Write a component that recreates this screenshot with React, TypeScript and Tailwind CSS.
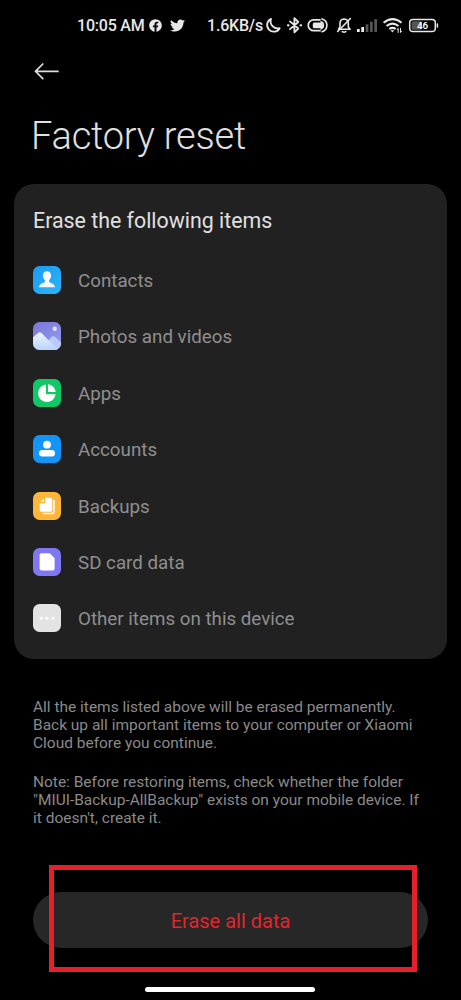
import type { ReactNode } from 'react'
import { FaFacebook, FaTwitter } from 'react-icons/fa'

interface EraseItem {
  label: string;
  icon: ReactNode;
}

const items: EraseItem[] = [
  { label: 'Contacts', icon: <ContactsIcon /> },
  { label: 'Photos and videos', icon: <PhotosIcon /> },
  { label: 'Apps', icon: <AppsIcon /> },
  { label: 'Accounts', icon: <AccountsIcon /> },
  { label: 'Backups', icon: <BackupsIcon /> },
  { label: 'SD card data', icon: <SdCardIcon /> },
  { label: 'Other items on this device', icon: <OtherIcon /> },
]

function ContactsIcon() {
  return (
    <svg width="28" height="28" viewBox="0 0 28 28">
      <defs>
        <linearGradient id="contacts-bg" x1="0" y1="0" x2="1" y2="1">
          <stop offset="0" stopColor="#1a9bf4" />
          <stop offset="1" stopColor="#2db4f8" />
        </linearGradient>
      </defs>
      <rect width="28" height="28" rx="6.5" fill="url(#contacts-bg)" />
      <path d="M14 5.2c-2.7 0-4.1 1.8-4.1 4.3 0 1.9.9 3.7 2 4.7v1.6c0 .8-5.9 1.9-5.9 5.4h16c0-3.5-5.9-4.6-5.9-5.4v-1.6c1.1-1 2-2.8 2-4.7 0-2.5-1.4-4.3-4.1-4.3z" fill="#f4fbff" />
    </svg>
  )
}

function PhotosIcon() {
  return (
    <svg width="28" height="28" viewBox="0 0 28 28">
      <defs>
        <linearGradient id="photos-bg" x1="0" y1="0" x2="0.7" y2="1">
          <stop offset="0" stopColor="#7c74da" />
          <stop offset="1" stopColor="#8e9df0" />
        </linearGradient>
        <linearGradient id="photos-hill" x1="0" y1="0" x2="0" y2="1">
          <stop offset="0" stopColor="#eef3ff" />
          <stop offset="1" stopColor="#b9d4fb" />
        </linearGradient>
        <clipPath id="photos-clip">
          <rect width="28" height="28" rx="6.5" />
        </clipPath>
      </defs>
      <g clipPath="url(#photos-clip)">
        <rect width="28" height="28" fill="url(#photos-bg)" />
        <path d="M12 22l6.5-7q1.8-1.9 3.6 0L28 20.5V28H12z" fill="#bccbfa" />
        <path d="M0 15.5l5-4.4q1.9-1.6 3.8.1L25 28H0z" fill="url(#photos-hill)" />
        <circle cx="21.7" cy="6.7" r="2.2" fill="#f0dcf8" />
      </g>
    </svg>
  )
}

function AppsIcon() {
  return (
    <svg width="28" height="28" viewBox="0 0 28 28">
      <rect width="28" height="28" rx="6.5" fill="#12c866" />
      <path d="M12.9 5.5a8.8 8.8 0 1 0 9.7 9.7h-9.7z" fill="#fff" />
      <path d="M15 5.2a8.7 8.7 0 0 1 7.7 7.8H15z" fill="#fff" />
    </svg>
  )
}

function AccountsIcon() {
  return (
    <svg width="28" height="28" viewBox="0 0 28 28">
      <rect width="28" height="28" rx="6.5" fill="#1294f8" />
      <circle cx="14" cy="9.7" r="3.9" fill="#fff" />
      <rect x="6" y="15" width="16" height="6.4" rx="3.2" fill="#fff" />
    </svg>
  )
}

function BackupsIcon() {
  return (
    <svg width="28" height="28" viewBox="0 0 28 28">
      <rect width="28" height="28" rx="6.5" fill="#fdb63a" />
      <path d="M12.3 5.8h5.4q1.6 0 1.6 1.6v10.7q0 1.6-1.6 1.6H8.3q-1.6 0-1.6-1.6v-6.8h4q1.6 0 1.6-1.6z" fill="#fff" />
      <path d="M10.9 6.4v2.5q0 1.1-1.1 1.1H7.3z" fill="#fff" />
      <path d="M21 8.5v11.3q0 1.7-1.7 1.7h-9" fill="none" stroke="#fff" strokeWidth="1.5" strokeLinecap="round" />
    </svg>
  )
}

function SdCardIcon() {
  return (
    <svg width="28" height="28" viewBox="0 0 28 28">
      <rect width="28" height="28" rx="6.5" fill="#7f78f2" />
      <path d="M8.6 5.3h8.2l4.8 4.9v10.2q0 2-2 2h-11q-2 0-2-2V7.3q0-2 2-2z" fill="#fff" />
    </svg>
  )
}

function OtherIcon() {
  return (
    <svg width="28" height="28" viewBox="0 0 28 28">
      <rect width="28" height="28" rx="6.5" fill="#e3e3e3" />
      <circle cx="8" cy="14.3" r="1.5" fill="#fff" />
      <circle cx="14" cy="14.3" r="1.5" fill="#fff" />
      <circle cx="20" cy="14.3" r="1.5" fill="#fff" />
    </svg>
  )
}

function StatusIcons() {
  return (
    <svg width="176" height="20" viewBox="264 15 176 20" fill="none" stroke="#e8e8e8" strokeWidth="1.6" strokeLinecap="round" strokeLinejoin="round">
      {/* do not disturb */}
      <path d="M271 18.9a6.7 6.7 0 1 0 8.7 9.3 7.2 7.2 0 0 1-8.7-9.3z" strokeWidth="1.8" />
      {/* bluetooth */}
      <path d="M290 21.4l8.3 7.1-3.9 3.8V18.2l3.9 3.8-8.3 7.1" strokeWidth="1.8" />
      <path d="M288 25.3h.5M300.6 25.3h.5" strokeWidth="2.2" />
      {/* wireless charging */}
      <path d="M320 19.8h-6.3a5.4 5.4 0 0 0 0 10.9h6.3" strokeWidth="1.7" />
      <path d="M322 18.9a6.7 6.7 0 0 1 0 12.9" strokeWidth="1.6" />
      <path d="M321 21.8a3.8 3.8 0 0 1 0 7.1" strokeWidth="1.5" />
      <rect x="312.8" y="22.5" width="10" height="5.7" rx="1.5" fill="#e8e8e8" stroke="none" />
      {/* muted */}
      <path d="M338.5 29.2h11.6l-1.8-2.3v-3.7q0-3.7-4.2-4.2-4.1.5-4.1 4.2v3.7z" />
      <path d="M342.3 31.6q1.8 1.3 3.5 0M337.7 31.5l12.7-13" />
      {/* signal */}
      <g stroke="none">
        <rect x="357" y="29" width="2.7" height="3" fill="#f0f0f0" />
        <rect x="361.3" y="27" width="2.7" height="5" fill="#f0f0f0" />
        <rect x="365.7" y="24.3" width="2.7" height="7.7" fill="#555" />
        <rect x="370" y="21.8" width="2.7" height="10.2" fill="#555" />
        <rect x="374.3" y="19.2" width="2.7" height="12.8" fill="#555" />
      </g>
      {/* wifi */}
      <g strokeWidth="2.1" strokeLinecap="butt">
        <path d="M383.6 22.8q9-7.2 18 0" />
        <path d="M386.5 26q6-4.7 12 0" />
        <path d="M389.3 29q3.2-2.4 6.4 0" />
      </g>
      <path d="M390.5 30.2h3.8l-1.9 2.2z" fill="#e8e8e8" stroke="none" />
      <path d="M398.2 32.5v-4l-1 1.2M400.5 28.5v4l1-1.2" strokeWidth="1" />
      {/* battery */}
      <rect x="409.7" y="19.5" width="25.6" height="12" rx="3.3" strokeWidth="1.5" />
      <rect x="411.5" y="21.3" width="10.5" height="8.4" rx="1.5" fill="#555" stroke="none" />
      <path d="M437.4 24v3" strokeWidth="1.5" />
      <text x="422.5" y="29.1" textAnchor="middle" fill="#fff" stroke="none" fontSize="9.8" fontWeight="600" fontFamily="Roboto, sans-serif" letterSpacing="0">46</text>
    </svg>
  )
}

export default function App() {
  return (
    <main className="relative flex h-[1000px] w-[461px] flex-col overflow-hidden bg-black font-[Roboto,sans-serif] text-[#e0e0e0]">
      <header className="flex h-[50px] items-start pt-[15px] pl-[77px] text-[16px] leading-5 font-medium tracking-[-0.2px] text-[#e8e8e8]">
        <span className="w-[72px] pt-px whitespace-nowrap">10:05 AM</span>
        <FaFacebook className="mt-1 shrink-0" size={13} />
        <FaTwitter className="mt-[3px] ml-2 shrink-0" size={15} />
        <span className="ml-[22px] w-[57px] shrink-0 pt-px whitespace-nowrap">1.6KB/s</span>
        <StatusIcons />
      </header>

      <button aria-label="Back" className="mt-3 ml-[34px] h-[18px] w-[26px]">
        <svg width="26" height="18" viewBox="0 0 26 18" fill="none" stroke="#dedede" strokeWidth="1.7">
          <path d="M24.7 9.3H1.5M9.3 1.5L1.5 9.3l7.8 7.8" />
        </svg>
      </button>

      <h1 className="mt-[32px] ml-[31px] h-[48px] text-[38px] leading-[48px] font-light tracking-[-0.2px] whitespace-nowrap">Factory reset</h1>

      <section className="mt-[24px] mr-[14px] ml-[14px] h-[475px] shrink-0 rounded-[20px] bg-[#212121] pt-[23px] pl-[19px]">
        <h2 className="text-[21.35px] leading-[28px] whitespace-nowrap">Erase the following items</h2>
        <ul className="mt-[31px] flex flex-col gap-[28.4px]">
          {items.map((item) => (
            <li key={item.label} className="flex h-[28px] items-center">
              {item.icon}
              <span className="ml-[17px] pt-[2px] text-[18.75px] whitespace-nowrap text-[#8f8f8f]">{item.label}</span>
            </li>
          ))}
        </ul>
      </section>

      <section className="mt-[39px] ml-[33px] h-[129px] shrink-0 text-[15.47px] leading-[18.2px] whitespace-nowrap text-[#8a8a8a]">
        <p>
          All the items listed above will be erased permanently.<br />
          Back up all important items to your computer or Xiaomi<br />
          Cloud before you continue.
        </p>
        <p className="mt-[20px]">
          Note: Before restoring items, check whether the folder<br />
          "MIUI-Backup-AllBackup" exists on your mobile device. If<br />
          it doesn't, create it.
        </p>
      </section>

      <button className="mt-[65px] ml-[33px] h-[56px] w-[395px] shrink-0 rounded-full bg-[#272727] pt-[2px] text-[20px] text-[#e0262c]">
        Erase all data
      </button>
      <div className="mt-[39px] ml-[145px] h-[5px] w-[170px] shrink-0 rounded-full bg-white" />

      {/* highlight around the button */}
      <div className="pointer-events-none absolute top-[865px] left-[49px] h-[107px] w-[368px] border-[5px] border-[#e3202b]" />
    </main>
  )
}
